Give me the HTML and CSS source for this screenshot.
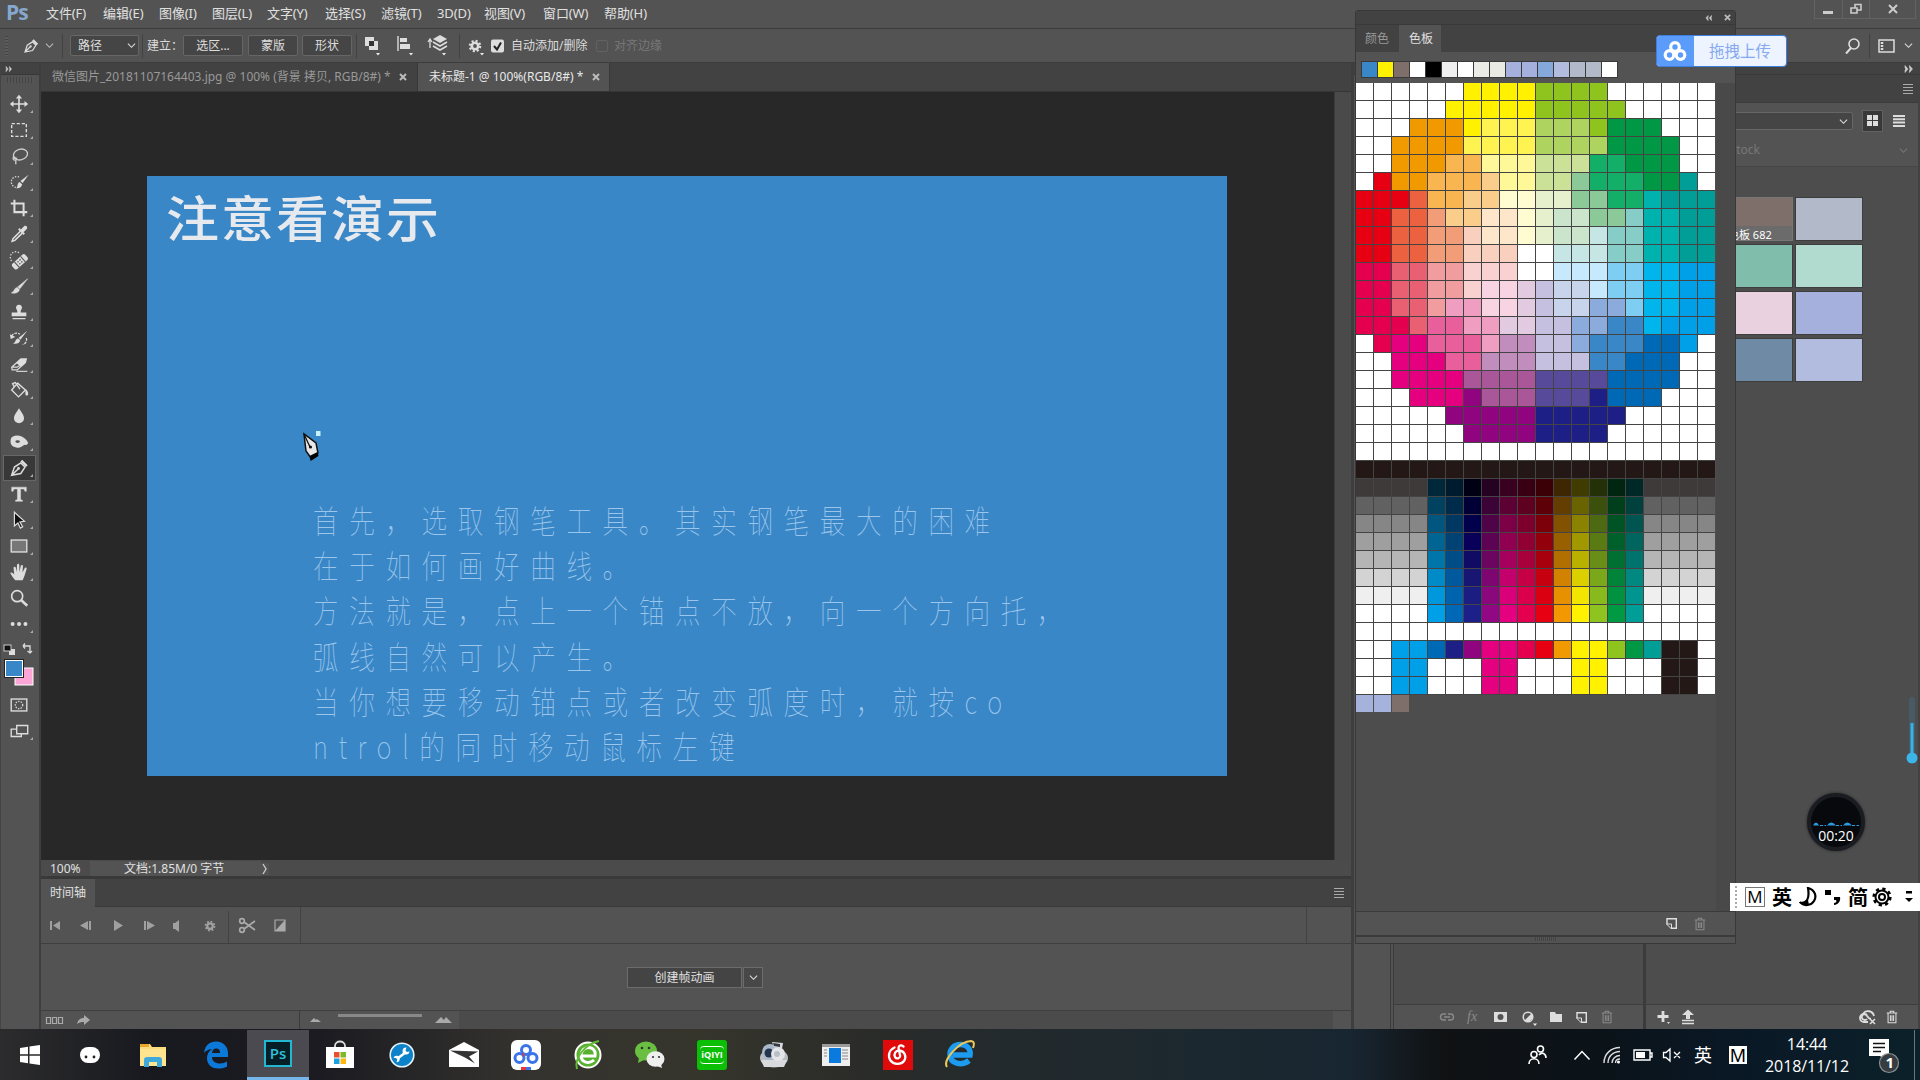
FILE: index.html
```
<!DOCTYPE html>
<html lang="zh-CN">
<head>
<meta charset="utf-8">
<title>Photoshop</title>
<link rel="stylesheet" href="styles.css">
</head>
<body>
<svg class="defs" width="0" height="0">
  <symbol id="tri" viewBox="0 0 4 4"><path d="M4 0V4H0Z" fill="#aaa"/></symbol>
  <symbol id="i-move" viewBox="0 0 24 24"><path d="M12 4v16M4 12h16" stroke="#ddd" stroke-width="1.8"/><path d="M12 2l3.4 4H8.600zM12 22l3.400-4H8.600zM2 12l4-3.400v6.800zM22 12l-4-3.400v6.800z" fill="#ddd"/></symbol>
  <symbol id="i-marq" viewBox="0 0 24 24"><rect x="4" y="5" width="16" height="14" fill="none" stroke="#ddd" stroke-width="1.500" stroke-dasharray="3.500 2"/></symbol>
  <symbol id="i-lasso" viewBox="0 0 24 24"><ellipse cx="13.500" cy="10.500" rx="7.800" ry="5.800" transform="rotate(-14 13 10)" fill="none" stroke="#ccc" stroke-width="1.500"/><path d="M6 14c3-1 5 2 2 2.500S5 13 7 12.500M8.500 16v5" fill="none" stroke="#ccc" stroke-width="1.500"/></symbol>
  <symbol id="i-quick" viewBox="0 0 24 24"><path d="M12 6.500a6 6 0 1 0-2 11.500" fill="none" stroke="#ddd" stroke-width="1.400" stroke-dasharray="1.500 1.600"/><path d="M22.500 4l-6.500 9-2.500-2zM12.500 12l3 2.500c-1 4-4 4.500-6.500 4.500 2-2 1-6 3.500-7z" fill="#ddd"/></symbol>
  <symbol id="i-crop" viewBox="0 0 24 24"><path d="M7 3v13.500h14M3 7h14v14" fill="none" stroke="#ddd" stroke-width="2.200"/></symbol>
  <symbol id="i-eye" viewBox="0 0 24 24"><path d="M13.500 9L5.500 17l-1 3 3-1 8-8" fill="none" stroke="#ddd" stroke-width="1.700"/><path d="M11 7l6 6 1.500-1.500-1.500-1.500 3.500-3.500c1.500-2-1-4.500-3-3L14 7l-1.500-1.500z" fill="#ddd"/></symbol>
  <symbol id="i-heal" viewBox="0 0 24 24"><path d="M4 13a6 6 0 1 1 9-8" fill="none" stroke="#ddd" stroke-width="1.400" stroke-dasharray="1.500 1.600"/><g transform="rotate(-42 13 14)"><rect x="3.500" y="10" width="19" height="8" rx="2.500" fill="#ddd"/><path d="M8.500 10v8M17.500 10v8" stroke="#555" stroke-width="1.200"/><path d="M11.500 12.500h.1M14.500 12.500h.1M11.500 15.500h.1M14.500 15.500h.1" stroke="#555" stroke-width="1.600" stroke-linecap="round"/></g></symbol>
  <symbol id="i-brush" viewBox="0 0 24 24"><path d="M21.500 4l-8.500 11-2.500-2zM10 13.500l2.500 2.300c-.5 3.800-5.500 4.700-9 3.700 3.500-1 3-5.500 6.500-6z" fill="#ddd" stroke="#ddd" stroke-width=".5"/></symbol>
  <symbol id="i-stamp" viewBox="0 0 24 24"><path d="M12 4a3.200 3.200 0 0 1 3 4.500c-.7 1.500-1.500 2-1 4H20v4H4v-4h6c.5-2-.3-2.500-1-4A3.200 3.200 0 0 1 12 4zM5 18.500h14v1.500H5z" fill="#ddd"/></symbol>
  <symbol id="i-hist" viewBox="0 0 24 24"><path d="M21 4l-7.500 10-2-2zM11 12.500l2.300 2c-.5 3.500-4.500 4.500-7.800 3.500 3-1 2.500-5 5.500-5.500z" fill="#ddd"/><path d="M4 10c2-4 6-4 9-2M20 12c1 3-1 7-4 7" fill="none" stroke="#ddd" stroke-width="1.400" stroke-dasharray="3 1.200"/><path d="M2 8l6 3-5 2z" fill="#ddd"/></symbol>
  <symbol id="i-erase" viewBox="0 0 24 24"><path d="M4 15.500L14 6.500h6l-1 4-9 8H4.500zM4 15.500h6l9-6" fill="none" stroke="#ddd" stroke-width="1.300"/><path d="M9 11l5-4.500h6l-1 4-5 4.500z" fill="#ddd"/><path d="M9 20h12" stroke="#ddd" stroke-width="1.200"/></symbol>
  <symbol id="i-bucket" viewBox="0 0 24 24"><path d="M10.500 4.500L19 12l-7.500 7.500L4 12zM7 9l-2-4 3-1 5 7" fill="none" stroke="#ddd" stroke-width="1.500"/><path d="M19 11c2 1 3.500 4 3 6s-3.500 1-3-1z" fill="#ddd"/></symbol>
  <symbol id="i-drop" viewBox="0 0 24 24"><path d="M12 3.500c2 4 5.500 7 5.500 11a5.500 5.500 0 0 1-11 0c0-4 3.500-7 5.500-11z" fill="#ddd"/></symbol>
  <symbol id="i-sponge" viewBox="0 0 24 24"><path fill-rule="evenodd" d="M3 9c1-4 7-5 12-3 3 1.500 6 4 7 7-1 2-3 3-4 2-3 2-5 4-9 3-5-1-7-4-6-9zm5 2.500a2.500 1.500 0 1 0 5 0 2.500 1.500 0 1 0-5 0z" fill="#ddd"/></symbol>
  <symbol id="i-pen" viewBox="0 0 24 24"><path d="M4 20l3-9 7-4.500 4.500 4.500-4.500 7zM4 20l7-7" fill="none" stroke="#ddd" stroke-width="1.600"/><circle cx="11.500" cy="12.500" r="1.500" fill="#ddd"/><path d="M13.500 5l2-2 6 6-2 2z" fill="#ddd"/></symbol>
  <symbol id="i-text" viewBox="0 0 24 24"><path d="M4 4.500h16V9h-1.600c-.3-2-1-2.500-2.400-2.500h-2.300V17c0 1.300.6 1.600 2.100 1.700V20h-7.600v-1.300c1.500-.1 2.100-.4 2.100-1.700V6.500H8C6.600 6.500 5.900 7 5.600 9H4z" fill="#ddd" stroke="#ddd" stroke-width=".5"/></symbol>
  <symbol id="i-arrow" viewBox="0 0 24 24"><path d="M7 3.500l11 10-5 .7 3 5.300-2.500 1.300-2.700-5.500L7 18.500z" fill="#111" stroke="#ddd" stroke-width="1.300"/></symbol>
  <symbol id="i-rect" viewBox="0 0 24 24"><rect x="3.500" y="5.500" width="17" height="13" fill="#777" stroke="#ddd" stroke-width="1.500"/></symbol>
  <symbol id="i-hand" viewBox="0 0 24 24"><path d="M8 21c-2-2-4-5-5.500-8 1.500-1.500 3 .3 4.300 1.700L6 7c1-1.500 2.300-.8 2.600.5L9.500 12l.3-8c.8-1.500 2.300-1 2.500.3l.2 7.700 1.500-7c1-1.300 2.400-.6 2.300.7L15.800 12.500l2.500-5c1.300-1 2.500 0 2 1.300L18 16l-2 5z" fill="#ddd"/></symbol>
  <symbol id="i-zoom" viewBox="0 0 24 24"><circle cx="10" cy="10" r="6" fill="none" stroke="#ddd" stroke-width="1.800"/><path d="M14.500 14.500l6.500 6" stroke="#ddd" stroke-width="2.800"/></symbol>
  <symbol id="i-dots" viewBox="0 0 24 24"><path d="M5 12h.1M12 12h.1M19 12h.1" stroke="#ddd" stroke-width="4.200" stroke-linecap="round"/></symbol>
  <symbol id="i-mask" viewBox="0 0 24 24"><rect x="3.500" y="5.500" width="17" height="13" fill="none" stroke="#ddd" stroke-width="1.500"/><circle cx="12" cy="12" r="4" fill="none" stroke="#ddd" stroke-width="1.400" stroke-dasharray="1.500 1.400"/></symbol>
  <symbol id="i-screen" viewBox="0 0 24 24"><path d="M9.500 10H3.500v8h11v-2.500M9.500 6h12v9h-12z" fill="none" stroke="#ddd" stroke-width="1.500"/></symbol>
  <symbol id="i-gear" viewBox="0 0 24 24"><circle cx="12" cy="12" r="5.500" fill="none" stroke="currentColor" stroke-width="4.500"/><circle cx="12" cy="12" r="8.800" fill="none" stroke="currentColor" stroke-width="4" stroke-dasharray="3.450 3.450"/></symbol>
  <symbol id="i-chev" viewBox="0 0 10 10"><path d="M1 3l4 4 4-4" fill="none" stroke="currentColor" stroke-width="1.200"/></symbol>
  <symbol id="i-trash" viewBox="0 0 16 16"><path d="M2 3.500h12M6 3V1.500h4V3M3.500 4v10.500h9V4M6.200 6v6.500M8 6v6.500M9.800 6v6.500" fill="none" stroke="currentColor" stroke-width="1.200"/></symbol>
  <symbol id="i-new" viewBox="0 0 13 13"><path d="M2 7V1.700h9.300v9.600H7" fill="none" stroke="currentColor" stroke-width="1.400"/><path d="M1.500 7h5v5z" fill="none" stroke="currentColor"/></symbol>
  <symbol id="i-menu" viewBox="0 0 12 10"><path d="M1 .5h10M1 3.500h10M1 6.500h10M1 9.500h10" stroke="#aaa" stroke-width="1"/></symbol>
  <symbol id="i-x" viewBox="0 0 8 8"><path d="M1 1l6 6M7 1L1 7" stroke="#bbb" stroke-width="2"/></symbol>
  <symbol id="i-ff" viewBox="0 0 10 8"><path d="M1 .5L4 4 1 7.500V5L2 4 1 3zM5.500.5l3 3.500-3 3.500V5l1-1-1-1z" fill="#ccc" stroke="#ccc" stroke-width=".6"/></symbol>
</svg>

<div class="app">
  <header class="menubar">
    <b class="logo">Ps</b>
    <nav class="menu">
      <span class="m1">文件(F)</span><span class="m2">编辑(E)</span><span class="m3">图像(I)</span><span class="m4">图层(L)</span><span class="m5">文字(Y)</span><span class="m6">选择(S)</span><span class="m7">滤镜(T)</span><span class="m8">3D(D)</span><span class="m9">视图(V)</span><span class="m10">窗口(W)</span><span class="m11">帮助(H)</span>
    </nav>
    <div class="winbtns">
      <svg width="27" height="18"><rect x="8" y="11" width="10" height="3" fill="#ccc"/></svg>
      <svg width="27" height="18"><path d="M8 8h6v5H8zM12 8V4.500h6V10h-4" fill="none" stroke="#ccc" stroke-width="1.600"/></svg>
      <svg width="46" height="18"><path d="M19 5l8 8M27 5l-8 8" stroke="#ccc" stroke-width="2"/></svg>
    </div>
  </header>

  <div class="options">
    <span class="grip"></span>
    <svg class="oi pen" width="18" height="18"><use href="#i-pen"/></svg>
    <svg class="chev c1" width="9" height="9"><use href="#i-chev"/></svg>
    <span class="vsep s1"></span>
    <div class="select">路径<svg width="9" height="9"><use href="#i-chev"/></svg></div>
    <span class="vsep s2"></span>
    <span class="build">建立：</span>
    <span class="btn b1">选区...</span><span class="btn b2">蒙版</span><span class="btn b3">形状</span>
    <span class="vsep s3"></span>
    <svg class="oi" width="24" height="28"><path d="M6 5h9v4h4v9h-9v-4H6z" fill="#ddd"/><rect x="10" y="9" width="5" height="5" fill="#333"/><path d="M17 21h4l-2 2.500z" fill="#eee"/></svg>
    <svg class="oi g1" width="24" height="28"><path d="M6 4v15" stroke="#ddd" stroke-width="1.400"/><path d="M8 6h7v4H8zM8 12h10v5H8z" fill="#ddd"/><path d="M17 21h4l-2 2.500z" fill="#eee"/></svg>
    <svg class="oi g2" width="26" height="28"><path d="M6 8v8M4 10l2-3 2 3" fill="none" stroke="#ddd" stroke-width="1.300"/><path d="M16 3l7 4-7 4-7-4z" fill="#ddd"/><path d="M9 10l7 4 7-4M9 14l7 4 7-4" fill="none" stroke="#ddd" stroke-width="1.600"/><path d="M18 21h4l-2 2.500z" fill="#eee"/></svg>
    <span class="vsep s4"></span>
    <svg class="gear" width="20" height="28"><svg width="14" height="14" y="7"><use href="#i-gear"/></svg><path d="M12 21h4l-2 2.500z" fill="#eee"/></svg>
    <svg class="check" width="14" height="14"><rect width="13" height="13" rx="2" y=".5" fill="#ddd"/><path d="M3 7l3 3.500L10 3.500" fill="none" stroke="#222" stroke-width="2"/></svg>
    <span class="auto">自动添加/删除</span>
    <span class="box"></span>
    <span class="dim">对齐边缘</span>
    <div class="orhs">
      <svg width="16" height="18"><circle cx="9" cy="7" r="5" fill="none" stroke="#ddd" stroke-width="1.600"/><path d="M6 11l-5 5.500" stroke="#ddd" stroke-width="2"/></svg>
      <span class="vsep"></span>
      <svg width="17" height="14"><rect x="1" y="1" width="15" height="12" fill="none" stroke="#ddd" stroke-width="1.500"/><path d="M4 3v8" stroke="#ddd" stroke-width="2.500" stroke-dasharray="2 1"/></svg>
      <svg class="chev" width="9" height="9"><use href="#i-chev"/></svg>
    </div>
  </div>

  <main class="work">
    <aside class="tools">
      <div class="thead"><svg width="8" height="6"><use href="#i-ff"/></svg></div>
      <div class="tgrip"></div>
      <div id="toollist"></div>
      <svg class="colors" width="40" height="48">
        <rect x="9" y="7" width="6" height="6" fill="#ddd"/><rect x="4" y="3" width="7" height="6" fill="#111" stroke="#ccc"/>
        <path d="M23 4h7v7M23 4l2-2.500M23 4l2 2.500M30 11l-2.500-2M30 11l2-2" fill="none" stroke="#ddd" stroke-width="1.300"/>
        <rect x="15" y="26" width="18" height="17" fill="#fba6d6" stroke="#fff"/><rect x="4.500" y="17.500" width="19" height="18" fill="#3a87c8" stroke="#222"/><rect x="5.500" y="18.500" width="17" height="16" fill="#3a87c8" stroke="#fff"/>
      </svg>
      <div id="modes"></div>
    </aside>

    <section class="doc">
      <div class="tabs">
        <div class="tab t1"><span>微信图片_20181107164403.jpg @ 100% (背景 拷贝, RGB/8#) *</span><svg width="8" height="8"><use href="#i-x"/></svg></div>
        <div class="tab t2 on"><span>未标题-1 @ 100%(RGB/8#) *</span><svg width="8" height="8"><use href="#i-x"/></svg></div>
      </div>
      <div class="stage">
        <div class="paste">
          <div class="art">
            <h1>注意看演示</h1>
            <div class="lines">
              <p>首先，选取钢笔工具。其实钢笔最大的困难</p>
              <p>在于如何画好曲线。</p>
              <p>方法就是，点上一个锚点不放，向一个方向托，</p>
              <p>弧线自然可以产生。</p>
              <p>当你想要移动锚点或者改变弧度时，就按co</p>
              <p>ntrol的同时移动鼠标左键</p>
            </div>
          </div>
        </div>
        <div class="vscroll"></div>
      </div>
      <div class="status"><span class="zoomv">100%</span><span class="docinfo">文档:1.85M/0 字节</span><svg width="8" height="12"><path d="M2 1l3 5-3 5" fill="none" stroke="#ccc" stroke-width="1.300"/></svg></div>
      <div class="timeline">
        <div class="ttabs"><span class="ttab">时间轴</span><svg width="12" height="10"><use href="#i-menu"/></svg></div>
        <div class="tctl">
          <svg width="188" height="38"><g fill="#a0a0a0"><path d="M9 14h2v9H9zM19 14v9l-7-4.500zM47 14v9l-8-4.500zM48 14h2v9h-2zM73 13l9 5.500-9 5.500zM103 14h2v9h-2zM106 14l8 4.500-8 4.500zM132 16h2l4-3v12l-4-3h-2z"/></g></svg>
          <div class="tsep"><svg class="tgear" width="12" height="12"><use href="#i-gear"/></svg></div>
          <div class="tcut"><svg width="70" height="38"><g fill="none" stroke="#aaa" stroke-width="1.700"><circle cx="13" cy="14" r="2.300"/><circle cx="13" cy="23" r="2.300"/><path d="M15 15l11 8M15 22l11-8"/><path d="M46 13h10v11H46z" stroke-width="1.200"/></g><path d="M56 13v11H46z" fill="#aaa"/></svg></div>
          <div class="tend"></div>
        </div>
        <div class="tbody"><span class="make">创建帧动画</span><span class="drop"><svg width="9" height="9"><use href="#i-chev"/></svg></span></div>
        <div class="tfoot">
          <svg width="418" height="18"><g fill="none" stroke="#aaa" stroke-width="1.200"><path d="M5.500 6.500h4v6h-4zM11.500 6.500h4v6h-4zM17.500 6.500h4v6h-4z"/></g><path d="M36 13c1-4 3-6 7-6V4l6 5-6 5v-3c-3 0-5 .5-7 2z" fill="#aaa"/><path d="M258.500 0v18" stroke="#3b3b3b"/><path d="M269 11l4-4 2 2 1-1 4 3z" fill="#aaa"/><rect x="297" y="3" width="84" height="3" fill="#888"/><path d="M394 12l6-6 3 3 2-3 6 6z" fill="#aaa"/></svg>
          <div class="tfill"></div>
        </div>
      </div>
    </section>

    <aside class="side">
      <div class="shead"><svg width="10" height="8"><use href="#i-ff"/></svg></div>
      <div class="scols">
        <div class="strip"></div>
        <div class="layers">
          <div class="lbody"></div>
          <div class="lfoot">
            <svg class="faint" width="16" height="12"><path d="M7 9H4.500a3 3 0 0 1 0-6H7M9 3h2.500a3 3 0 0 1 0 6H9M5 6h6" fill="none" stroke="currentColor" stroke-width="1.400"/></svg>
            <i class="fx">fx</i>
            <svg width="16" height="14"><path fill-rule="evenodd" d="M1 2h13v10H1zM10.500 7a3 3 0 1 0-6 0 3 3 0 0 0 6 0z" fill="#ddd"/></svg>
            <svg width="16" height="18"><circle cx="7" cy="9" r="4.800" fill="none" stroke="#ddd" stroke-width="1.500"/><path d="M10.500 5.500A5 5 0 0 1 3.500 12.500z" fill="#ddd"/><path d="M12 15.500h4l-2 2.500z" fill="#eee"/></svg>
            <svg width="14" height="12"><path d="M1 1h5l1 2h6v8H1z" fill="#ddd"/></svg>
            <svg width="13" height="13"><use href="#i-new"/></svg>
            <svg class="faint" width="14" height="14"><use href="#i-trash"/></svg>
          </div>
        </div>
        <div class="lib">
          <div class="ltab"><svg width="12" height="10"><use href="#i-menu"/></svg></div>
          <div class="lsel"><span class="dd"><svg width="9" height="9"><use href="#i-chev"/></svg></span><span class="grid4"><i></i><i></i><i></i><i></i></span><svg width="12" height="12"><path d="M0 1h12M0 4.300h12M0 7.600h12M0 11h12" stroke="#ddd" stroke-width="2"/></svg></div>
          <div class="lsearch"><span>Adobe Stock</span><svg width="9" height="9"><use href="#i-chev"/></svg></div>
          <div class="lgrid">
            <div class="sw named"><span>色板 682</span></div><div class="sw w2"></div>
            <div class="sw w3"></div><div class="sw w4"></div>
            <div class="sw w5"></div><div class="sw w6"></div>
            <div class="sw w7"></div><div class="sw w8"></div>
          </div>
          <div class="libfoot">
            <svg width="42" height="18"><path d="M8 3v11M2.500 8.500h11" stroke="#ddd" stroke-width="2.800"/><path d="M12 14h3l-1.500 2z" fill="#ddd"/><path d="M33 1.500l6 5.500h-4v4h-4V7h-4z" fill="#ddd"/><path d="M27 12.500h12M27 15.500h12" stroke="#ddd" stroke-width="1.400"/></svg>
            <svg class="cc" width="18" height="16"><g fill="none" stroke="#ddd" stroke-width="1.800"><path d="M4 5c3-5 10-3 11 2M9 13H5a4 4 0 0 1 0-8c4 0 3 5 7 5M8 6a3 3 0 1 0 0 4"/><path d="M11 10l5 5M16 10l-5 5" stroke-width="1.500"/></g></svg>
            <svg class="lt" width="14" height="14"><use href="#i-trash"/></svg>
          </div>
        </div>
      </div>
    </aside>
  </main>

  <footer class="taskbar">
    <div class="slot"><svg width="24" height="24"><path d="M2 5l8-1.200v7.500H2zM11.500 3.500L22 2v9.300H11.500zM2 12.700h8v7.500L2 19zM11.500 12.700H22V22l-10.500-1.500z" fill="#fff"/></svg></div>
    <div class="slot"><svg width="24" height="20"><rect x="2" y="2" width="20" height="16" rx="8" fill="#fff"/><circle cx="8" cy="12" r="1.400" fill="#222"/><circle cx="16" cy="12" r="1.400" fill="#222"/></svg></div>
    <div class="slot"><svg width="30" height="28"><path d="M2 3h10l2 3h14v19H2z" fill="#fbdc7c"/><path d="M2 3h9v3H2z" fill="#e9a72c"/><path d="M2 8h26v17H2z" fill="#ffe48f"/><path d="M6 26v-7q0-3 3-3h12q3 0 3 3v7h-5v-5h-8v5z" fill="#3fa9dc"/></svg></div>
    <div class="slot"><svg width="28" height="30"><path d="M2 13C3 5 8 1.500 14 1.500c8 0 12 6 12 12V17H10c0 5 5 6.500 8 6.500 2.500 0 5-.8 7-2v5.200C22 28 19 28.500 16 28.500c-7 0-11-4.500-11-10.500 0-4 2-7 5-9-4 .5-6.500 2-8 4zm8 0h8c0-3-1-4.500-3.700-4.500C11.500 8.500 10.300 10.500 10 13z" fill="#0c78d8"/></svg></div>
    <div class="slot active"><span class="psico">Ps</span></div>
    <div class="slot"><svg width="30" height="32"><path d="M10 11V7c0-6 10-6 10 0v4" fill="none" stroke="#ddd" stroke-width="1.800"/><rect x="1" y="8" width="28" height="21" fill="#fff"/><path d="M9 13h5.500v5.500H9z" fill="#e84f2c"/><path d="M15.500 13H21v5.500h-5.500z" fill="#7fb927"/><path d="M9 19.500h5.500V25H9z" fill="#1ba1e2"/><path d="M15.500 19.500H21V25h-5.500z" fill="#fcb713"/></svg></div>
    <div class="slot"><svg width="28" height="28"><circle cx="14" cy="14" r="11.800" fill="#0b82ca" stroke="#e8f3f9" stroke-width="1.600"/><path d="M9.500 17.500l8-6" stroke="#fff" stroke-width="2.600"/><path d="M21.500 10.500a3.500 3.500 0 1 1-3-4l-1 3 1.500 1.500zM5.500 17a3.200 3.200 0 1 1 3 4.200l.8-2.700-1.300-1.500z" fill="#fff"/></svg></div>
    <div class="slot"><svg width="32" height="28"><path d="M1 9l15-8 15 8v17H1z" fill="#fff"/><path d="M2 9.500l28 1-9 5 6 7-10-6z" fill="#333"/></svg></div>
    <div class="slot"><svg width="32" height="32"><rect x="1" y="1" width="30" height="30" rx="6" fill="#fff"/><g fill="none" stroke="#3a74ea" stroke-width="3"><circle cx="16" cy="11" r="4.500"/><circle cx="9.500" cy="19" r="4.500"/><circle cx="22.500" cy="19" r="4.500"/></g><path d="M11 28h5v3h-5zM12 13l3 3-2 2z" fill="#e8343a"/><path d="M16 28h5v3h-5z" fill="#3a74ea"/></svg></div>
    <div class="slot"><svg width="32" height="32"><circle cx="16" cy="16" r="12.500" fill="#58b030" stroke="#fff" stroke-width="2"/><path d="M8 17h15c1-5-2-8.500-6.500-8.500S9 12 9 16.500c0 7 8 9 13 4.500" fill="none" stroke="#fff" stroke-width="3"/><path d="M5 30C2 19 13 5 27 2" fill="none" stroke="#62ba35" stroke-width="2"/></svg></div>
    <div class="slot"><svg width="32" height="30"><ellipse cx="12" cy="11" rx="11" ry="9.500" fill="#69bf41"/><path d="M5 17l-1 6 6-3z" fill="#69bf41"/><ellipse cx="21.500" cy="19" rx="9" ry="7.700" fill="#eee"/><path d="M27 24l1 4-5-2z" fill="#eee"/><g fill="#333"><circle cx="8" cy="8" r="1.300"/><circle cx="15" cy="8" r="1.300"/><circle cx="19" cy="17" r="1.100"/><circle cx="25" cy="17" r="1.100"/></g></svg></div>
    <div class="slot"><span class="qiyi"><span>iQIYI</span></span></div>
    <div class="slot"><svg width="32" height="28"><ellipse cx="16" cy="17" rx="14" ry="9.500" fill="#b9bdc2"/><path d="M6 26h20l3-7H3z" fill="#d8dadd"/><circle cx="12" cy="11" r="8" fill="#a9b9ca"/><circle cx="11" cy="12" r="4.500" fill="#25344c"/><circle cx="20" cy="13" r="7" fill="#e3e5e8"/><circle cx="19" cy="13" r="3" fill="#b9bfc7"/><path d="M14 1l11 1-1 6-8-2z" fill="#d7dade"/><path d="M15 2l7 1v3l-6-1z" fill="#37393e"/></svg></div>
    <div class="slot"><svg width="28" height="24"><path d="M0 1h28v22H0z" fill="#eee"/><path d="M0 1h28v3H0z" fill="#9a9a9a"/><rect x="7" y="5" width="12" height="15" fill="#0a7ade"/><path d="M2 7h3M2 10h3M2 13h3M20 7h6M20 10h6M20 13h6M20 16h6" stroke="#888"/></svg></div>
    <div class="slot"><svg width="32" height="32"><rect x="1" y="1" width="30" height="30" fill="#e00a0a"/><path d="M12.500 8.500C7 11 5.500 17 8.500 21.500c3 4.200 10.500 4.500 13.500.5 3-4.500.5-10-4.500-10.500-4-.3-6 3.500-4.500 6.500 1.500 2.300 5 1.500 5.200-1L16.500 9c0-2.500 2.500-3.500 5-1.500" fill="none" stroke="#fff" stroke-width="2.300" stroke-linecap="round"/></svg></div>
    <div class="slot"><svg width="34" height="32"><path d="M10 16h17c1-6-3-10.500-9.500-10.500S7 10 7 15.500c0 9 11.500 12 19 6" fill="none" stroke="#1c9bf0" stroke-width="5.500"/><path d="M4 28C-1 21 17 2 28 2c4 .5 3 4 2 7" fill="none" stroke="#e9c75a" stroke-width="2"/></svg></div>
    <div class="tray">
      <svg width="20" height="22"><g fill="none" stroke="#fff" stroke-width="1.600"><circle cx="13.500" cy="5" r="3"/><circle cx="7" cy="10.500" r="3"/><path d="M2 20c0-7 10-7 10 0M12 11c3-4 7-1 7 3"/></g></svg>
      <svg class="up" width="18" height="12"><path d="M1.500 10.500L9 2.500l7.500 8" fill="none" stroke="#fff" stroke-width="1.500"/></svg>
      <svg class="wifi" width="18" height="18"><g fill="none" stroke="#ddd" stroke-width="1.400"><path d="M1 17C1 8 8 1.500 17 1.500M5 17C5 10.500 10 5.500 17 5.500M9 17c0-4 3.500-7.500 8-7.500M12.500 17c0-2.500 2-4 4.500-4"/></g><circle cx="15.500" cy="16" r="1.500" fill="#fff"/></svg>
      <svg class="bat" width="20" height="12"><path d="M1 1h16v10H1zM17 4h2v4h-2" fill="none" stroke="#fff" stroke-width="1.400"/><rect x="3" y="3" width="9" height="6" fill="#fff"/></svg>
      <svg class="mute" width="20" height="16"><path d="M1.500 5.500H4L8 2v12l-4-3.500H1.500zM12 5l6 6M18 5l-6 6" fill="none" stroke="#fff" stroke-width="1.300"/></svg>
      <span class="ying">英</span>
      <span class="mbox">M</span>
      <span class="clock">14:44<br>2018/11/12</span>
      <svg class="note" width="34" height="40"><path d="M2 4h20v17h-4v4l-5-4H2z" fill="#fff"/><path d="M6 8.500h12M6 12.500h12M6 16.500h8" stroke="#111" stroke-width="1.300"/><circle cx="22" cy="28" r="9.500" fill="#363c40" stroke="#8a8f92" stroke-width="1.200"/><text x="18.500" y="33" class="badge">1</text></svg>
      <span class="peek"></span>
    </div>
  </footer>
</div>

<svg class="cursor" width="22" height="36"><path d="M2 3l2 17 5 7 7-5-2-10z" fill="#e8e8e8" stroke="#111" stroke-width="1.500"/><path d="M2 3l6 13" stroke="#111" stroke-width="1.300"/><circle cx="8.500" cy="16" r="1.600" fill="#111"/><path d="M7.500 25l8-4 1 4-8 5z" fill="#000"/><rect x="14" y="0" width="4.500" height="5" fill="#c8f1ff"/></svg>

<section class="float">
  <div class="fhead"><svg class="flip" width="9" height="6"><use href="#i-ff"/></svg><svg width="7" height="7"><use href="#i-x"/></svg></div>
  <div class="ftabs"><span class="ft1">颜色</span><span class="ft2">色板</span></div>
  <div class="frecent"><div id="recent"></div></div>
  <div class="fbody"><div id="swatches"></div><div class="fscroll"></div></div>
  <div class="ffoot"><svg width="13" height="13"><use href="#i-new"/></svg><svg class="faint" width="14" height="14"><use href="#i-trash"/></svg></div>
  <div class="fgrip"><span></span></div>
</section>

<div class="upload"><span class="cloud"><svg width="26" height="24"><g fill="none" stroke="#fff" stroke-width="3.200"><circle cx="13" cy="7" r="4.300"/><circle cx="7.500" cy="15" r="4.300"/><circle cx="18.500" cy="15" r="4.300"/></g></svg></span><span class="utext">拖拽上传</span></div>

<svg class="thermo" width="16" height="72"><rect x="5" y="0" width="6" height="58" rx="3" fill="#475a66"/><path d="M8 26v32" stroke="#35b2e6" stroke-width="3"/><circle cx="8" cy="61" r="5.500" fill="#3cb6e8"/></svg>

<div class="timer"><svg width="48" height="6"><path d="M1 4.500q3-6 6 0zM15 4.500q4-6 9 0zM31 4.500q4-6 9 0z" fill="#2c9ade"/><path d="M8 4.500h6M24 4.500h6M40 4.500h7" stroke="#2c9ade" stroke-dasharray="3 1.500"/></svg><span>00:20</span></div>

<div class="ime">
  <span class="igrip"></span><span class="im">M</span><b>英</b>
  <svg class="moon" width="18" height="20"><path d="M9 1c7 2 9 8 6 13-3 5-10 5-13 2 5 0 9-3 7-15z" fill="none" stroke="#000" stroke-width="2.200"/><path d="M1 14q4 3 8-1l1 5H3z"/></svg>
  <svg class="punc" width="18" height="20"><path d="M1 3h6v5H1zM10 10h6c1 4-2 8-6 8v-2c2 0 3-2 2-3h-2z"/></svg>
  <b class="jian">简</b>
  <svg class="igear" width="20" height="20"><circle cx="10" cy="10" r="6.500" fill="none" stroke="#000" stroke-width="2"/><circle cx="10" cy="10" r="8.300" fill="none" stroke="#000" stroke-width="2.600" stroke-dasharray="3.260 3.260"/><circle cx="10" cy="10" r="3" fill="none" stroke="#000" stroke-width="2"/></svg>
  <svg class="more" width="8" height="16"><path d="M1 2h6v2.500H1zM0 9h8l-4 4z"/></svg>
</div>

<script src="app.js"></script>
</body>
</html>
```

FILE: styles.css
```
* { box-sizing: border-box; }
html, body { margin: 0; height: 100%; overflow: hidden; background: #535353; }
body { font: 13px/1 "Noto Sans", "Noto Sans CJK SC", sans-serif; color: #e0e0e0; white-space: nowrap; position: relative; }
svg { display: block; flex: none; }
.defs { position: absolute; }
.app { width: 1920px; height: 1080px; display: flex; flex-direction: column; }

.menubar { height: 29px; flex: none; display: flex; border-bottom: 1px solid #3c3c3c; }
.logo { width: 46px; padding: 1px 0 0 6px; font: 700 21px/23px "Open Sans", sans-serif; color: #86a8cf; letter-spacing: -1px; }
.menu { display: flex; line-height: 26px; letter-spacing: -.1px; }
.menu span { flex: none; }
.m1 { width: 57px; } .m2 { width: 56px; } .m3 { width: 53px; } .m4 { width: 55px; } .m5 { width: 58px; } .m6 { width: 56px; }
.m7 { width: 56px; } .m8 { width: 47px; } .m9 { width: 59px; } .m10 { width: 61px; }
.winbtns { display: flex; margin-left: auto; margin-right: 4px; height: 19px; width: 102px; border: 1px solid #636363; border-top: 0; }
.winbtns svg + svg { border-left: 1px solid #636363; }

.options { height: 34px; flex: none; display: flex; align-items: center; border-bottom: 1px solid #3c3c3c; color: #ddd; }
.grip { width: 3px; height: 20px; margin-left: 5px; background: repeating-linear-gradient(#444 0 1px, #5c5c5c 1px 3px); }
.pen { margin-left: 14px; }
.c1 { margin-left: 5px; color: #bbb; }
.vsep { width: 1px; height: 24px; background: #424242; }
.s1 { margin-left: 8px; }
.select { margin-left: 7px; width: 69px; height: 21px; border: 1px solid #666; background: #454545; border-radius: 2px; display: flex; align-items: center; justify-content: space-between; padding: 0 2px 0 7px; font-size: 12px; }
.s2 { margin-left: 3px; }
.build { width: 36px; margin: 0 0 0 4px; font-size: 12px; line-height: 18px; }
.btn { height: 21px; border: 1px solid #666; border-radius: 2px; background: #454545; text-align: center; line-height: 19px; font-size: 12px; position: relative; }
.b1 { width: 60px; } .b2 { width: 50px; margin-left: 5px; } .b3 { width: 50px; margin-left: 4px; }
.s3 { margin: 0 2px 0 4px; }
.g1 { margin-left: 9px; }
.g2 { margin-left: 8px; }
.s4 { margin: 0 8px 0 9px; }
.gear { margin: 0 3px 0 0; color: #ddd; }
.check { margin-right: 6px; }
.auto { width: 85px; font-size: 12px; }
.box { width: 12px; height: 12px; border: 1px solid #626262; border-radius: 2px; margin-right: 6px; }
.dim { color: #777; font-size: 12px; }
.orhs { display: flex; align-items: center; gap: 8px; margin: 0 7px 0 auto; }
.orhs .chev { margin-left: 1px; }

.work { height: 966px; flex: none; display: flex; }
.tools { width: 41px; background: #535353; border-left: 1px solid #444; border-right: 2px solid #3e3e3e; flex: none; }
.thead { height: 12px; background: #424242; padding: 3px 0 0 4px; border-bottom: 1px solid #383838; }
.tgrip { height: 6px; margin: 2px 5px 8px 6px; background: repeating-linear-gradient(90deg, #444 0 1px, #555 1px 3px); }
.tool { height: 26px; width: 33px; margin-left: 2px; display: flex; align-items: center; padding-left: 5px; }
.tool .m { width: 22px; height: 22px; }
.tool .t { width: 3px; height: 3px; align-self: flex-end; margin: 0 0 4px 0; }
.tool.sel { background: #383838; outline: 1px solid #666; outline-offset: -1px; }
.colors { margin-left: -1px; margin-top: 5px; }
#modes { margin-top: 2px; }

.doc { width: 1313px; flex: none; display: flex; flex-direction: column; border-right: 3px solid #3e3e3e; }
.tabs { height: 29px; flex: none; display: flex; background: #424242; border-bottom: 1px solid #353535; font-size: 12px; }
.tab { display: flex; align-items: center; color: #999; padding-left: 11px; border-right: 1px solid #393939; }
.tab span { flex: none; }
.t1 { width: 377px; } .t1 span { width: 347px; } .t2 { width: 192px; } .t2 span { width: 163px; }
.tab.on { background: #535353; color: #e8e8e8; }
.stage { height: 768px; display: flex; flex: none; }
.paste { width: 1293px; background: #282828; padding: 84px 0 0 106px; }
.vscroll { flex: 1; background: #4a4a4a; border-left: 1px solid #3c3c3c; }
.art { width: 1080px; height: 600px; background: #3a87c8; padding: 12px 0 0 19px; }
h1 { margin: 0; width: 300px; font: 500 53px/60px "Noto Sans CJK SC", sans-serif; color: #e6e9ed; letter-spacing: 2px; transform: scaleY(.92); transform-origin: 0 3px; }
.lines { margin: 249px 0 0 147px; width: 1000px; transform: scaleX(.8); transform-origin: 0 0; }
.lines p { margin: 0; font: 100 32px/45.200px "Noto Sans CJK SC", sans-serif; letter-spacing: 13.250px; color: rgba(206, 230, 252, .68); }
.status { height: 16px; flex: none; background: #4b4b4b; display: flex; align-items: center; font-size: 12px; padding-top: 1px; }
.zoomv { width: 49px; padding-left: 9px; }
.docinfo { background: #535353; padding-left: 34px; width: 171px; line-height: 16px; }
.status svg { width: 8px; background: #535353; }
.timeline { flex: 1; display: flex; flex-direction: column; border-top: 3px solid #393939; }
.ttabs { height: 28px; flex: none; background: #424242; border-bottom: 1px solid #393939; display: flex; justify-content: space-between; align-items: center; padding-right: 6px; }
.ttab { width: 54px; height: 28px; background: #535353; padding-left: 9px; font-size: 12px; line-height: 27px; }
.tctl { height: 37px; flex: none; display: flex; border-bottom: 1px solid #3f3f3f; }
.tctl > svg { width: 160px; }
.tsep { width: 28px; height: 32px; margin-top: 4px; border-right: 1px solid #424242; color: #a0a0a0; padding: 9px 0 0 3px; }
.tcut { width: 72px; border-right: 1px solid #424242; }
.tend { flex: 1; margin-right: 44px; border-right: 1px solid #424242; }
.tbody { flex: 1; display: flex; padding: 23px 0 0 586px; }
.make { width: 115px; height: 21px; border: 1px solid #6c6c6c; background: #444; text-align: center; font-size: 12px; line-height: 19px; }
.drop { width: 20px; height: 21px; margin-left: 1px; border: 1px solid #6c6c6c; background: #484848; padding: 5px 0 0 5px; }
.tfoot { height: 19px; flex: none; border-top: 1px solid #3f3f3f; display: flex; }
.tfill { width: 874px; background: #4b4b4b; }

.side { flex: 1; display: flex; flex-direction: column; }
.shead { height: 12px; flex: none; background: #424242; border-bottom: 1px solid #393939; display: flex; justify-content: flex-end; padding: 2px 6px 0 0; }
.scols { flex: 1; display: flex; }
.strip { width: 37px; border-right: 1px solid #3b3b3b; }
.layers { width: 252px; margin-left: 2px; border-left: 1px solid #3b3b3b; border-right: 2px solid #3b3b3b; display: flex; flex-direction: column; }
.lbody { flex: 1; background: #4d4d4d; }
.lfoot { height: 25px; border-top: 1px solid #3e3e3e; display: flex; align-items: center; padding-left: 45px; gap: 12px; }
.faint { color: #8a8a8a; }
.fx { width: 14px; color: #8a8a8a; font: italic 14px/16px "Liberation Serif", serif; }
.lib { flex: 1; background: #4d4d4d; display: flex; flex-direction: column; border-left: 1px solid #3b3b3b; border-right: 2px solid #424242; }
.ltab { height: 28px; background: #424242; border-bottom: 1px solid #3b3b3b; display: flex; justify-content: flex-end; padding: 9px 4px 0; }
.lsel { height: 35px; background: #535353; display: flex; align-items: center; justify-content: flex-end; padding: 1px 13px 0 0; gap: 10px; }
.dd { width: 180px; height: 18px; border: 1px solid #666; border-radius: 2px; background: #454545; display: flex; justify-content: flex-end; padding: 4px 4px 0; margin-right: -1px; }
.grid4 { width: 21px; height: 22px; background: #383838; border: 1px solid #626262; display: grid; grid-template-columns: 5px 5px; grid-auto-rows: 5px; gap: 1px; padding: 4px; }
.grid4 i { background: #ddd; }
.lsearch { height: 29px; background: #535353; display: flex; justify-content: flex-end; align-items: center; gap: 139px; color: #777; font-size: 12px; padding: 0 10px 4px 0; border-bottom: 1px solid #464646; }
.lgrid { display: grid; grid-template-columns: 69px 69px; grid-auto-rows: 45px; gap: 2px 1px; justify-content: end; padding: 29px 54px 0 0; flex: 1; align-content: start; }
.sw { border: 1px solid #3d3d3d; background: #80bdab; margin: 1px 1px 0 0; }
.named { background: linear-gradient(#7e6f6a 0 28px, #6b6b6b 28px); border-color: #777; color: #fff; font-size: 11px; padding: 31px 0 0 2px; }
.w2 { background: #b2bac9; } .w4 { background: #b2dbcf; } .w5 { background: #e9d1df; } .w6 { background: #a5b0dc; } .w7 { background: #6f8aa5; } .w8 { background: #b2bcdf; }
.libfoot { height: 25px; background: #535353; border-top: 1px solid #3e3e3e; display: flex; align-items: center; padding: 0 19px 0 9px; }
.cc { margin-left: auto; }
.lt { margin-left: 8px; color: #ddd; }

.taskbar { flex: 1; display: flex; padding-top: 1px; background: linear-gradient(90deg, #2c2c2d 0, #18191f 150px, #1b1b21 320px, #34322e 520px, #35352c 700px, #2b2c29 860px, #232a2d 1000px, #1c282f 1200px, #182631 1350px, #101214 1440px, #0b1319 1600px, #0a1826 1740px, #0b2029 1900px); }
.slot { width: 62px; flex: none; display: flex; align-items: center; justify-content: center; }
.slot:nth-child(1) { width: 60px; }
.slot:nth-child(2) { width: 60px; }
.slot:nth-child(3) { width: 65px; }
.slot.active { background: #4a4a50; border-bottom: 3px solid #76b5ea; }
.psico { width: 28px; height: 27px; border: 2px solid #22b8d4; background: #061e26; color: #2fc0dc; font: 600 15px/22px "Open Sans", sans-serif; text-align: center; }
.qiyi { width: 30px; height: 30px; border-radius: 3px; background: #0bbe06; padding: 6px 3px; }
.qiyi span { display: block; height: 18px; border: 1px solid #fff; border-width: 1.500px 0; border-radius: 4px; color: #fff; font: 700 9px/16px "Open Sans", sans-serif; text-align: center; }
.tray { flex: 1; display: flex; align-items: center; justify-content: flex-end; color: #fff; }
.up { margin-left: 26px; } .wifi { margin-left: 12px; } .bat { margin-left: 12px; } .mute { margin-left: 9px; }
.ying { margin-left: 12px; font-size: 18px; width: 18px; }
.mbox { width: 18px; height: 18px; margin-left: 17px; background: #fff; color: #000; font-size: 18px; line-height: 18px; text-align: center; }
.clock { width: 88px; margin-left: 16px; font: 16px/22px "Open Sans", sans-serif; letter-spacing: -.100px; text-align: center; }
.note { margin: 0 13px 0 16px; }
.badge { font: 700 15px "Open Sans", sans-serif; fill: #fff; }
.peek { width: 1px; height: 50px; background: #6b7478; margin-right: 5px; }

.cursor { position: absolute; left: 302px; top: 431px; }

.float { position: absolute; left: 1355px; top: 10px; width: 381px; height: 934px; border: 1px solid #383838; background: #4d4d4d; display: flex; flex-direction: column; border-radius: 3px 3px 0 0; }
.fhead { height: 14px; flex: none; background: #424242; border-bottom: 1px solid #393939; display: flex; justify-content: flex-end; align-items: center; gap: 11px; padding-right: 4px; }
.flip { transform: scaleX(-1); }
.ftabs { height: 27px; flex: none; background: #424242; display: flex; line-height: 27px; font-size: 12px; }
.ft1 { width: 43px; padding-left: 9px; color: #999; }
.ft2 { width: 42px; padding-left: 10px; background: #535353; }
.frecent { height: 31px; flex: none; background: #535353; padding: 9px 0 0 5px; }
#recent { display: grid; grid-template-columns: repeat(16, 15px); gap: 1px; width: 257px; height: 17px; padding: 1px; background: #3a3a3a; }
.fbody { flex: 1; display: flex; justify-content: space-between; }
#swatches { display: grid; grid-template-columns: repeat(20, 17px); grid-auto-rows: 17px; gap: 1px; align-content: start; height: 612px; background: #444; }
#swatches, #recent { align-self: flex-start; }
.fscroll { width: 19px; background: #494949; }
.ffoot { height: 26px; flex: none; background: #535353; border-top: 1px solid #3b3b3b; border-bottom: 2px solid #3b3b3b; display: flex; justify-content: flex-end; align-items: center; gap: 15px; padding-right: 28px; }
.fgrip { height: 6px; background: #535353; display: flex; justify-content: center; }
.fgrip span { width: 22px; height: 4px; background: repeating-linear-gradient(90deg, #444 0 1px, #555 1px 2px); }

.upload { position: absolute; left: 1656px; top: 35px; width: 131px; height: 32px; border: 1px solid #3d7fe0; border-radius: 4px; background: #edf3ff; display: flex; overflow: hidden; }
.cloud { width: 37px; background: #5b9bf9; padding: 4px 0 0 5px; }
.utext { flex: 1; color: #86a9ee; font-size: 15.500px; line-height: 30px; padding-left: 15px; }
.thermo { position: absolute; left: 1904px; top: 697px; }
.timer { position: absolute; left: 1807px; top: 793px; width: 58px; height: 58px; border-radius: 50%; background: #07090d; border: 4px solid #1b1c22; box-shadow: 0 0 3px #222; display: flex; flex-direction: column; align-items: center; padding-top: 24px; color: #fff; font: 14px/17px "Open Sans", sans-serif; }
.ime { position: absolute; left: 1730px; top: 883px; width: 190px; height: 28px; background: #fff; color: #000; display: flex; align-items: center; padding-left: 5px; }
.igrip { width: 2px; height: 22px; background: repeating-linear-gradient(#aaa 0 2px, #fff 2px 4px); }
.im { width: 20px; height: 20px; margin: 0 7px 0 8px; border: 1px solid #777; text-align: center; font: 17px/18px "Open Sans", sans-serif; }
.ime b { font: 700 20px/26px "Noto Sans CJK SC", sans-serif; width: 20px; }
.moon { margin-left: 7px; } .punc { margin-left: 7px; } .ime .jian { margin-left: 6px; } .igear { margin-left: 4px; } .more { margin-left: 13px; }
```

FILE: app.js
```
const ns = 'http://www.w3.org/2000/svg';
function tool(name, opts = {}) {
  const d = document.createElement('div');
  d.className = 'tool' + (opts.sel ? ' sel' : '');
  d.innerHTML = `<svg class="m" xmlns="${ns}"><use href="#i-${name}"/></svg>` +
    (opts.plain ? '' : '<svg class="t"><use href="#tri"/></svg>');
  return d;
}
const list = document.getElementById('toollist');
['move', 'marq', 'lasso', 'quick', 'crop', 'eye', 'heal', 'brush', 'stamp', 'hist', 'erase', 'bucket',
  'drop', 'sponge', 'pen', 'text', 'arrow', 'rect', 'hand', 'zoom', 'dots']
  .forEach(n => list.append(tool(n, { sel: n === 'pen', plain: n === 'zoom' })));
const modes = document.getElementById('modes');
modes.append(tool('mask', { plain: true }), tool('screen'));

const colors = {
  '.': '#fff', '#': '#231815',
  Y: '#fff100', y: '#fff352', u: '#fff899', v: '#fffcd2',
  L: '#8fc41f', l: '#afd35f', m: '#cce198', n: '#e6f0cd',
  O: '#f19a00', o: '#f8b550', p: '#facd8a', q: '#fde6c9',
  G: '#009844', g: '#13af69', h: '#8cc998', i: '#cbe5cc',
  R: '#e60012', r: '#ec6140', s: '#f29c78', t: '#f9cfbd',
  T: '#009e96', a: '#00b2ad', b: '#86ccc7', c: '#c6e6e6',
  K: '#e4004f', k: '#e96072', j: '#f19d9f', x: '#f8d1d0',
  C: '#00a0e8', d: '#00b5ec', e: '#7ecdf3', f: '#c7e9fd',
  M: '#e4007e', 1: '#e85f9c', 2: '#ef9dc0', 3: '#f8d4e3',
  B: '#0069b6', 4: '#3a87c8', 5: '#8aabdb', 6: '#c7d4ec',
  P: '#90057f', 7: '#a95798', 8: '#c08dbd', 9: '#e2cae0',
  N: '#1d1f87', 0: '#584a9a', w: '#c6c0e0'
};
const wheel = `
......YYYYLLLL......
.....YYYYYLLLLL.....
...OOOYyyylllLGGG...
..OOOOyyyyllllGGGG..
..OOOoouuummmggGGG..
.ROOooopuummhgggGGT.
RRRrooppvvnnhhggaTTT
RRrrsppqqvniihhbaaTT
RRrrsstqqvniicbbaaTT
RRrrssttt..cccbbaaTT
KKkkjjxxx..fffeeddCC
KKkkjjx339w66feeddCC
KKkkj22339w6655eddCC
KKKk112299ww5544dCCC
.KMM111288ww5444BBC.
..MMM11888www44BBB..
..MMMM77770000BBBB..
...MMMP777000NBBB...
.....PPPPPNNNNN.....
......PPPPNNNN......
....................
####################`.trim().split('\n');
const inks = `
....................
..CCBNPMMKROYYLGT##.
..CC...MM...YY...##.
..CC...MM...YY...##.`.trim().split('\n');

const box = document.getElementById('swatches');
function cell(parent, color) {
  const c = document.createElement('i');
  c.style.background = color;
  parent.append(c);
}
const paint = rows => rows.forEach(r => [...r].forEach(k => cell(box, colors[k])));
paint(wheel);

const grays = ['#3e3a39', '#616161', '#868686', '#9f9f9f', '#b5b5b5', '#d3d3d3', '#efefef', '#fff'];
const shade = [.25, .41, .54, .63, .73, .86, .95, 1];
const navy = ['#000014', '#000036', '#00004d', '#09005a', '#100b64', '#181573', '#1c1d80', '#1d2088'];
const ramps = [[0, 160, 233], [0, 104, 183], null, [146, 7, 131], [228, 0, 127], [229, 0, 79],
  [230, 0, 18], [243, 152, 0], [255, 241, 0], [143, 195, 31], [0, 153, 68], [0, 158, 150]];
grays.forEach((g, y) => {
  for (let i = 0; i < 4; i++) cell(box, g);
  ramps.forEach(c => cell(box, c ? `rgb(${c.map(v => Math.round(v * shade[y])).join(',')})` : navy[y]));
  for (let i = 0; i < 4; i++) cell(box, g);
});
paint(inks);
['#a5b2dc', '#a5b2dc', '#7e6f6a'].forEach(c => cell(box, c));

['#3a87c8', '#fff100', '#7e6f6a', '#fff', '#000', '#efefef', '#fff', '#ebece6', '#e9eae3', '#a5b0dc', '#a5b0dc',
  '#86a9db', '#b2bcdf', '#b2bac9', '#b2bac9', '#fff'].forEach(c => cell(document.getElementById('recent'), c));
```
